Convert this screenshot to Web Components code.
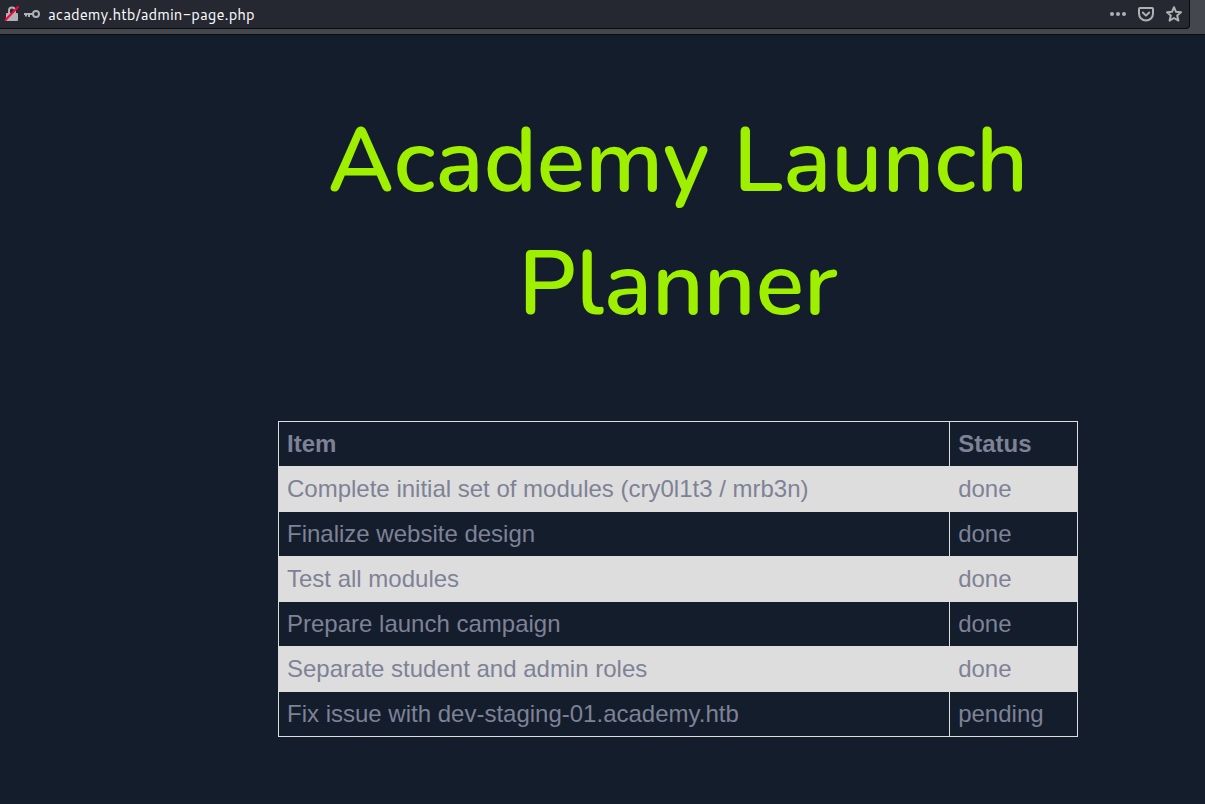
<!DOCTYPE html>
<html lang="en">
<head>
<meta charset="utf-8">
<title>Academy Launch Planner</title>
<style>
body { margin: 0; background: #141d2b; min-height: 100vh; }
</style>
</head>
<body>
<address-bar url="academy.htb/admin-page.php"></address-bar>
<planner-page>
  <span slot="title">Academy Launch Planner</span>
  <planner-table></planner-table>
</planner-page>
<script>
class AddressBar extends HTMLElement {
  constructor() {
    super();
    this.attachShadow({ mode: "open" }).innerHTML = `
      <style>
        :host { display: block; box-sizing: border-box; height: 35px; padding-right: 15px;
          background: #45474e; border-bottom: 1px solid #0c0c0d; }
        .field { display: flex; align-items: center; box-sizing: border-box; height: 29px;
          padding: 0 7px 0 4px; background: #252731; border: solid #0c0c0d; border-width: 0 1px 1px 0;
          border-radius: 0 0 4px 0; }
        svg { display: block; }
        .key { margin-left: 4px; }
        input { flex: 1; min-width: 0; margin: 0 0 0 8px; padding: 2px 0 0; border: 0; outline: 0; background: none;
          color: #f9f9fa; font: 15px/24px Cantarell, "Noto Sans", sans-serif; }
        button { margin: 0 0 0 12px; padding: 0; border: 0; background: none; color: #b1b1b5; }
      </style>
      <div class="field">
        <svg width="16" height="16" viewBox="0 0 16 16" aria-hidden="true">
          <path d="M5 8V4.500a3 3 0 0 1 6 0V8" fill="none" stroke="#b1b1b5" stroke-width="2"/>
          <rect x="2" y="7" width="12" height="8" rx="1" fill="#b1b1b5"/>
          <path d="M1.500 14L14 1" stroke="#ff0039" stroke-width="2" stroke-linecap="round"/>
        </svg>
        <svg class="key" width="16" height="16" viewBox="0 0 16 16" aria-hidden="true">
          <circle cx="12" cy="8" r="3" fill="none" stroke="#b1b1b5" stroke-width="2"/>
          <path d="M9 8H0M2 8v2.500M5 8v3" fill="none" stroke="#b1b1b5" stroke-width="2"/>
        </svg>
        <input type="text" aria-label="Address" spellcheck="false">
        <button aria-label="Page actions"><svg width="16" height="16" viewBox="0 0 16 16" fill="currentColor">
          <circle cx="2" cy="8" r="2"/><circle cx="8" cy="8" r="2"/><circle cx="14" cy="8" r="2"/></svg></button>
        <button aria-label="Save to Pocket"><svg width="16" height="16" viewBox="0 0 16 16" fill="none" stroke="currentColor" stroke-width="2">
          <path d="M2 2h12a1 1 0 0 1 1 1v4.500a7 7 0 0 1-14 0V3a1 1 0 0 1 1-1z"/>
          <path d="M4.800 6.500L8 9.600l3.200-3.100" stroke-linecap="round" stroke-linejoin="round"/></svg></button>
        <button aria-label="Bookmark this page"><svg width="16" height="16" viewBox="0 0 16 16" fill="none" stroke="currentColor" stroke-width="2" stroke-linejoin="round">
          <path d="M8 1.200l2 4.600 5 .5-3.800 3.300 1.200 5L8 12l-4.400 2.600 1.200-5L1 6.300l5-.5z"/></svg></button>
      </div>`;
    this.shadowRoot.querySelector("input").value = this.getAttribute("url");
  }
}
customElements.define("address-bar", AddressBar);

class PlannerPage extends HTMLElement {
  constructor() {
    super();
    this.attachShadow({ mode: "open" }).innerHTML = `
      <style>
        :host { display: block; padding: 65px 0 67px 151px; }
        main { max-width: 800px; margin: 0 auto; }
        h1 { margin: 0 0 75px; color: #9fef00; text-align: center;
          font: 600 90px/123px Nunito, Lato, sans-serif; }
      </style>
      <main><h1><slot name="title"></slot></h1><slot></slot></main>`;
  }
}
customElements.define("planner-page", PlannerPage);

class PlannerTable extends HTMLElement {
  constructor() {
    super();
    const items = [
      ["Complete initial set of modules (cry0l1t3 / mrb3n)", "done"],
      ["Finalize website design", "done"],
      ["Test all modules", "done"],
      ["Prepare launch campaign", "done"],
      ["Separate student and admin roles", "done"],
      ["Fix issue with dev-staging-01.academy.htb", "pending"]
    ];
    this.attachShadow({ mode: "open" }).innerHTML = `
      <style>
        :host { display: block; }
        table { width: 100%; border-collapse: collapse; color: #7e8296;
          font: 24px/28px "Liberation Sans", Arial, sans-serif; }
        th, td { padding: 8px; border: 1px solid #ddd; text-align: left; }
        th:last-child { width: 16%; box-sizing: border-box; }
        tbody tr:nth-child(odd) { background: #ddd; }
      </style>
      <table>
        <thead><tr><th scope="col">Item</th><th scope="col">Status</th></tr></thead>
        <tbody>${items.map(([item, status]) => `<tr><td>${item}</td><td>${status}</td></tr>`).join("")}</tbody>
      </table>`;
  }
}
customElements.define("planner-table", PlannerTable);
</script>
</body>
</html>
